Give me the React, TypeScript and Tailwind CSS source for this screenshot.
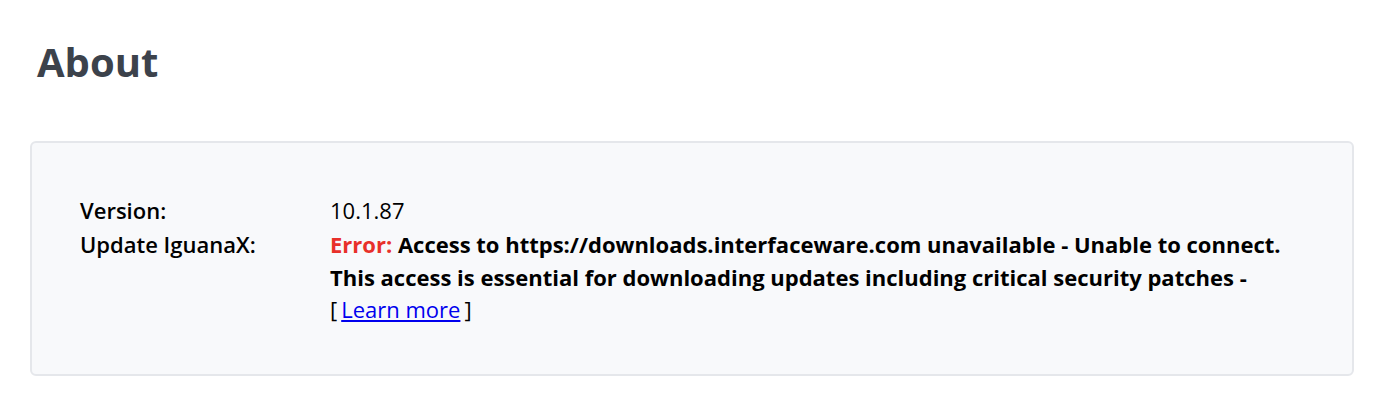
import React from "react";

export default function App() {
  return (
    <div className="min-h-[406px] w-[1387px] bg-white pl-[30px] pr-[33px] pt-[36px]" style={{ fontFamily: '"Open Sans", sans-serif' }}>
      <h1 className="pl-[7px] text-[40px] font-bold leading-[52px] text-[#3c424b]">About</h1>
      <div className="mt-[53px] h-[235px] rounded-[6px] border-2 border-[#e5e7eb] bg-[#f8f9fb] pl-[48px] pt-[50px]">
        <div className="grid grid-cols-[250px_1fr] text-[22px] leading-[34px] text-black">
          <div className="font-semibold">Version:</div>
          <div>10.1.87</div>
          <div className="font-semibold">Update IguanaX:</div>
          <div>
            <div className="font-bold">
              <span className="text-[#e8302a]">Error:</span> Access to https://downloads.interfaceware.com unavailable - Unable to connect.
            </div>
            <div className="font-bold leading-[32px]">This access is essential for downloading updates including critical security patches -</div>
            <div className="leading-[32px]">
              [<a href="#" className="mx-[4px] text-[#0000ee] underline">Learn more</a>]
            </div>
          </div>
        </div>
      </div>
    </div>
  );
}
